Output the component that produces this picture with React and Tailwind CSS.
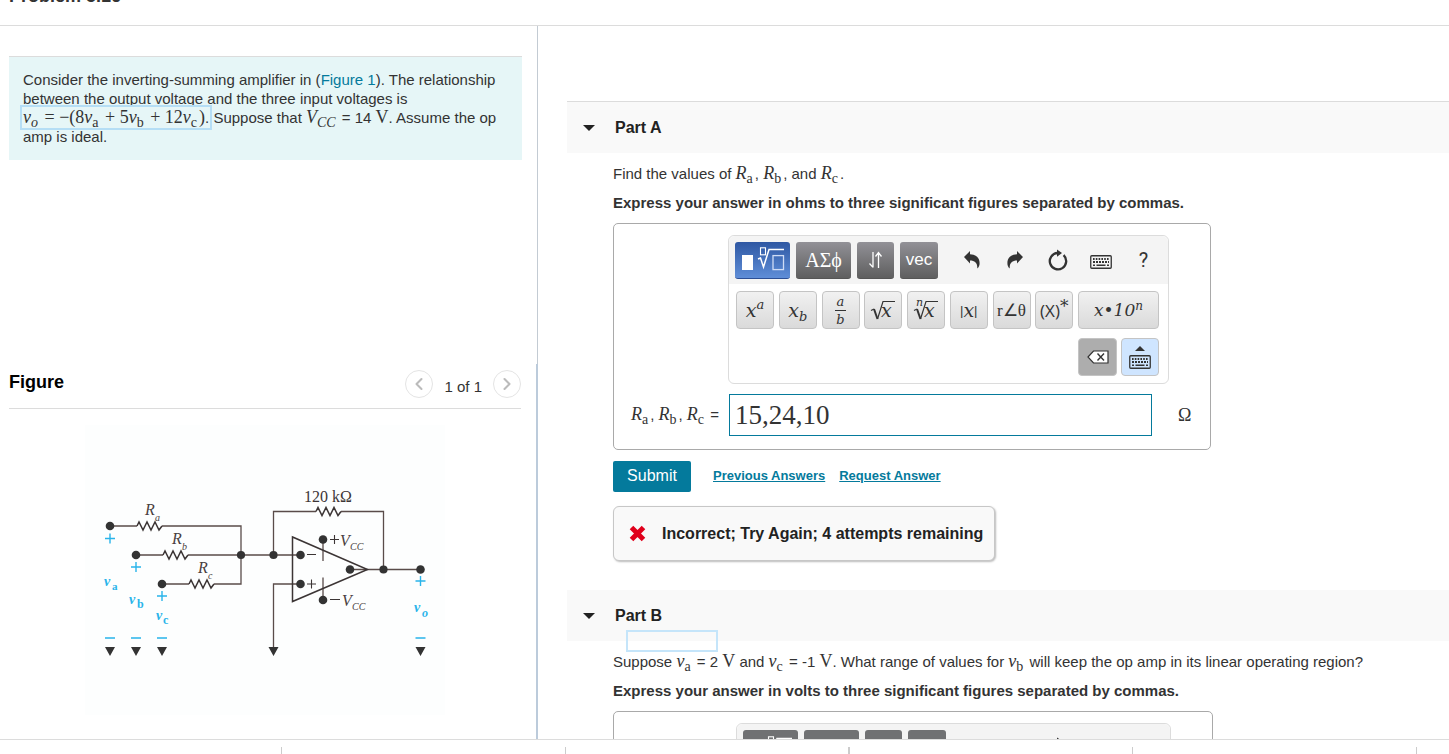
import { ChevronLeft, ChevronRight } from "lucide-react";

const serif = "font-['Liberation_Serif',serif]";

// A math symbol with an upright or italic subscript
function Sym({ base, sub, italicSub }) {
  return (
    <span className="mr-0.5 font-['Liberation_Serif',serif] text-[18px] leading-none">
      <i>{base}</i>
      <span
        className={
          italicSub
            ? "relative top-1 text-[14px] italic leading-none"
            : "relative top-1 text-[14px] leading-none"
        }
      >
        {sub}
      </span>
    </span>
  );
}

function Unit({ children }) {
  return <span className="font-['Liberation_Serif',serif] text-[18px] leading-none">{children}</span>;
}

function UndoIcon({ flip }) {
  return (
    <svg width="16" height="18" viewBox="0 0 16 18" className={flip ? "-scale-x-100" : ""}>
      <path
        fill="#333"
        d="M0 6 L6 0 V3.2 C12 3.4 15.6 6.8 15.6 12 C15.6 14.4 15 16 13.2 17.6 C13.8 12.4 11 9.6 6 9.6 V12.6 Z"
      />
    </svg>
  );
}

function ResetIcon() {
  return (
    <svg width="20" height="22" viewBox="0 0 20 22">
      <path d="M15.6 6.2 A8.2 8.2 0 1 1 9.5 4" fill="none" stroke="#333" strokeWidth="2.3" />
      <path d="M9 0.4 L14 4 L9 7.8 Z" fill="#333" />
    </svg>
  );
}

function KeyboardIcon() {
  return (
    <svg width="22" height="14" viewBox="0 0 22 14">
      <rect x="0.75" y="0.75" width="20.5" height="12.5" rx="1" fill="none" stroke="#333" strokeWidth="1.3" />
      <path d="M3 4 H19" stroke="#333" strokeWidth="1.8" strokeDasharray="1.6 1.2" />
      <path d="M3 7 H19" stroke="#333" strokeWidth="1.8" strokeDasharray="2 1" />
      <path d="M3 10.2 H5 M6.5 10.2 H15.5 M17 10.2 H19" stroke="#333" strokeWidth="1.6" />
    </svg>
  );
}

function TemplateIcon() {
  return (
    <svg width="44" height="25" viewBox="0 0 44 25">
      <rect x="1" y="8" width="11" height="15" fill="#fff" />
      <rect x="19.5" y="0.8" width="5" height="7" fill="none" stroke="#fff" strokeWidth="1.1" />
      <path d="M17 12 L19.5 11 L22.5 20 L28 2.5 H43" fill="none" stroke="#fff" strokeWidth="1.5" />
      <rect x="32" y="8.6" width="10.5" height="14" fill="none" stroke="#cfdcf5" strokeWidth="1.3" />
    </svg>
  );
}

function Root({ index }) {
  return (
    <svg width="28" height="26" viewBox="0 0 28 26" fill="none" stroke="#333">
      <path d="M2 13.5 L5 12" strokeWidth="1.1" />
      <path d="M5 12 L8.5 22" strokeWidth="2" />
      <path d="M8.5 22 L14 4.5 H26" strokeWidth="1.2" />
      <text x="12" y="20" fill="#333" stroke="none" fontFamily="DejaVu Serif" fontStyle="italic" fontSize="19">
        x
      </text>
      {index && (
        <text x="4" y="9" fill="#333" stroke="none" fontFamily="DejaVu Serif" fontStyle="italic" fontSize="11">
          {index}
        </text>
      )}
    </svg>
  );
}

const tabOn = "flex h-[37px] items-center justify-center rounded-[3px] border-b border-[#2c4f95] bg-linear-to-b from-[#2f58a3] to-[#5f8ed8] text-white";
const tabOff = "flex h-[37px] items-center justify-center rounded-[3px] border-b border-[#555] bg-linear-to-b from-[#929197] to-[#5f5f5f] text-white";
const tabFlat = "flex h-[37px] items-center justify-center rounded-[3px] bg-[#707173] text-white";
const key =
  "flex h-[38px] items-center justify-center rounded border border-[#c4c4c4] bg-linear-to-b from-[#f1f1f1] to-[#dadada] font-['DejaVu_Serif',serif] leading-none text-[#333]";

function Toolbar({ idle }) {
  const off = idle ? tabFlat : tabOff;
  return (
    <div
      className={`${idle ? "w-[435px]" : "w-[441px]"} shrink-0 rounded-md border border-[#dcdcdc] bg-white text-[#333]`}
    >
      <div className="flex h-12 items-center rounded-t-md bg-[#f4f4f4] pl-1.5">
        <div className="flex shrink-0 gap-1.5">
          <button aria-label="Templates" className={`${idle ? tabFlat : tabOn} w-[55px]`}>
            <TemplateIcon />
          </button>
          <button className={`${off} ${serif} w-[55px] text-[20px]`}>ΑΣϕ</button>
          <button aria-label="Arrows" className={`${off} w-[37px]`}>
            <svg width="16" height="20" viewBox="0 0 16 20" fill="none" stroke="#fff" strokeWidth="1.3">
              <path d="M5 2 V17 M1.5 13.5 L5 17.4 M5 17.4 V14" />
              <path d="M10.5 18 V3 M7.5 6.5 L10.5 2.6 L13.5 6.5" />
            </svg>
          </button>
          <button className={`${off} w-[38px] text-[17px]`}>vec</button>
        </div>
        <div className={`${idle ? "ml-1" : "ml-3"} flex flex-1 items-center`}>
          <button aria-label="Undo" className="flex w-[43px] justify-center">
            <UndoIcon />
          </button>
          <button aria-label="Redo" className="flex w-[43px] justify-center">
            <UndoIcon flip />
          </button>
          <button aria-label="Reset" className="flex w-[43px] justify-center">
            <ResetIcon />
          </button>
          <button aria-label="Keyboard shortcuts" className="flex w-[43px] justify-center pt-1">
            <KeyboardIcon />
          </button>
          <button aria-label="Help" className="w-[43px] text-center font-['Roboto',sans-serif] text-[20px]">
            ?
          </button>
        </div>
      </div>
      <div className="flex justify-between pt-[7px] pr-[9px] pl-[7px]">
        <button className={`${key} w-[38px] text-[19px]`}>
          <i>x</i>
          <i className="mb-3 text-[13px]">a</i>
        </button>
        <button className={`${key} w-[38px] text-[19px]`}>
          <i>x</i>
          <i className="mt-3 text-[13px]">b</i>
        </button>
        <button className={`${key} w-[38px] flex-col text-[13px] italic`}>
          <span className="border-b border-[#333] px-0.5 pb-0.5">a</span>
          <span className="pt-0.5">b</span>
        </button>
        <button aria-label="Square root" className={`${key} w-[38px]`}>
          <Root />
        </button>
        <button aria-label="nth root" className={`${key} w-[38px]`}>
          <Root index="n" />
        </button>
        <button className={`${key} w-[38px] text-[19px]`}>
          <span className="font-['Liberation_Sans',sans-serif] text-[13px]">|</span>
          <i>x</i>
          <span className="font-['Liberation_Sans',sans-serif] text-[13px]">|</span>
        </button>
        <button className={`${key} ${serif} w-[38px] text-[17px]`}>r∠θ</button>
        <button className={`${key} w-[38px] text-[17px]`}>
          <span className="font-['Open_Sans',sans-serif]">(X)</span>
          <span className="mb-2 text-[17px]">*</span>
        </button>
        <button className={`${key} w-[81px] text-[17px]`}>
          <i>x•10</i>
          <i className="mb-2 text-[12px]">n</i>
        </button>
      </div>
      <div className="flex justify-end gap-1 pt-[9px] pr-[9px] pb-[7px]">
        <button
          aria-label="Delete"
          className="flex h-[38px] w-[39px] items-center justify-center rounded border border-[#c4c4c4] bg-[#adadad]"
        >
          <svg width="22" height="14" viewBox="0 0 22 14" stroke="#333">
            <path d="M1 7 L6.5 1 H21 V13 H6.5 Z" fill="#fff" strokeWidth="1.2" />
            <path d="M10.5 3.5 L17 10.5 M17 3.5 L10.5 10.5" strokeWidth="1.4" />
          </svg>
        </button>
        <button
          aria-label="Hide keypad"
          className="flex h-[38px] w-[38px] flex-col items-center justify-center gap-1 rounded border border-[#c4c4c4] bg-[#cfe5ff]"
        >
          <svg width="10" height="5" viewBox="0 0 10 5">
            <path d="M0 5 L5 0 L10 5 Z" fill="#333" />
          </svg>
          <KeyboardIcon />
        </button>
      </div>
    </div>
  );
}

const resistor = "l2 -4 l4 8 l4 -8 l4 8 l4 -8 l4 8 l3 -4";

function Circuit() {
  return (
    <svg
      role="img"
      aria-label="Inverting-summing amplifier circuit"
      width="360"
      height="290"
      viewBox="85 425 360 290"
      fontFamily="Liberation Serif"
    >
      <rect x="85" y="425" width="360" height="290" fill="#fdfefe" />
      <g fill="none" stroke="#5a4c4a" strokeWidth="1.3">
        <path d="M110 526 H137 M162 526 H241 V584 H214 M189 584 H162 M136 555 H163 M188 555 H300" />
        <path d="M273.5 555 V511.5 H316 M341 511.5 H383.5 V569.5 M350 569.5 H420 M300 584 H273.5 V648" />
        <path d="M323 540 V561 M323 577.5 V600" />
      </g>
      <g fill="none" stroke="#3c3535" strokeWidth="1.5">
        <path d={`M137 526 ${resistor}`} />
        <path d={`M163 555 ${resistor}`} />
        <path d={`M189 584 ${resistor}`} />
        <path d={`M316 511.5 ${resistor}`} />
        <path d="M292.5 537 V601.5 L367.5 569.5 Z" />
        <path
          d="M307 554.5 H316 M307 584 H316 M311.5 579.5 V588.5 M330 539.5 H339 M334.5 535 V544 M330 599.5 H340"
          strokeWidth="1.1"
        />
      </g>
      <g fill="#333">
        <circle cx="110" cy="526" r="4.3" />
        <circle cx="136" cy="555" r="4.3" />
        <circle cx="162" cy="584" r="4.3" />
        <circle cx="241" cy="555" r="4.1" />
        <circle cx="273.5" cy="555" r="4.1" />
        <circle cx="300.5" cy="555" r="4.3" />
        <circle cx="300.5" cy="584" r="4.3" />
        <circle cx="323" cy="539.5" r="4.3" />
        <circle cx="323" cy="600" r="4.3" />
        <circle cx="350" cy="569.5" r="4.3" />
        <circle cx="383.5" cy="569.5" r="4.1" />
        <circle cx="420.5" cy="569.5" r="4.3" />
        <path d="M105 647 h10 l-5 9 z M131 647 h10 l-5 9 z M157 647 h10 l-5 9 z M268.5 647 h10 l-5 9 z M415.5 647 h10 l-5 9 z" />
      </g>
      <path
        fill="none"
        stroke="#29b4ea"
        strokeWidth="1.4"
        d="M105 538.5 h10 m-5 -5 v10 M131 567 h10 m-5 -5 v10 M157 596 h10 m-5 -5 v10 M415.5 581 h10 m-5 -5 v10 M105 638 h10 M131 638 h10 M157 638 h10 M415.5 638 h10"
      />
      <g fill="#29b4ea" fontWeight="bold" fontSize="14">
        <text x="104" y="586" fontStyle="italic">v</text>
        <text x="112" y="590" fontSize="11">a</text>
        <text x="129" y="604" fontStyle="italic">v</text>
        <text x="137" y="608" fontSize="12">b</text>
        <text x="156" y="620" fontStyle="italic">v</text>
        <text x="163" y="624" fontSize="12">c</text>
        <text x="414" y="612" fontStyle="italic">v</text>
        <text x="422" y="617" fontStyle="italic" fontSize="12">o</text>
      </g>
      <g fill="#4a4040" fontStyle="italic" fontSize="16">
        <text x="145" y="515">R</text>
        <text x="155" y="521" fontSize="10">a</text>
        <text x="172" y="544">R</text>
        <text x="182" y="550" fontSize="10">b</text>
        <text x="198" y="573">R</text>
        <text x="208" y="579" fontSize="10">c</text>
        <text x="340" y="546">V</text>
        <text x="350" y="550" fontSize="10">CC</text>
        <text x="342" y="606">V</text>
        <text x="352" y="610" fontSize="10">CC</text>
      </g>
      <text x="304" y="502" fill="#3c3535" fontSize="16">120 kΩ</text>
    </svg>
  );
}

function PartHeader({ title }) {
  return (
    <button className="flex h-[51px] w-full items-center gap-5 bg-[#f9f9f9] pl-4 text-left text-[16px] font-bold text-[#222]">
      <svg width="12" height="6" viewBox="0 0 12 6">
        <path d="M0 0 H12 L6 6 Z" fill="#222" />
      </svg>
      {title}
    </button>
  );
}

function ProblemPane() {
  return (
    <section className="h-[338px] shrink-0 border-r border-[#c3cbd3] pt-[30px] pr-[15px] pl-[9px]">
      <div className="h-[104px] border-t border-[#dcdcdc] bg-[#e6f6f7] pt-[13px] pr-3 pl-3.5 text-[15px] leading-[19px]">
        Consider the inverting-summing amplifier in (
        <a href="#figure" className="text-[#047a9c]">
          Figure 1
        </a>
        ). The relationship between the output voltage and the three input voltages is
        <br />
        <span className="inline-block h-[19px] whitespace-nowrap outline-2 outline-offset-1 outline-[#b5def5]">
          <Sym base="v" sub="o" italicSub />
          <Unit> = −(8</Unit>
          <Sym base="v" sub="a" />
          <Unit> + 5</Unit>
          <Sym base="v" sub="b" />
          <Unit> + 12</Unit>
          <Sym base="v" sub="c" />
          <Unit>)</Unit>.
        </span>{" "}
        Suppose that <Sym base="V" sub="CC" italicSub /> = 14 <Unit>V</Unit>. Assume the op amp is ideal.
      </div>
    </section>
  );
}

function FigurePane() {
  return (
    <section id="figure" className="flex-1 border-r-2 border-[#bccbdb] pr-[15px] pl-[9px]">
      <div className="flex h-[45px] items-center justify-between border-b border-[#dcdcdc]">
        <h2 className="pb-2 text-[18px] font-bold text-black">Figure</h2>
        <div className="flex items-center gap-[11px] pb-1 text-[15px]">
          <button
            aria-label="Previous figure"
            className="flex size-7 items-center justify-center rounded-full border border-[#e4e4e4] text-[#bbb]"
          >
            <ChevronLeft size={20} strokeWidth={2.5} />
          </button>
          <span className="pt-1.5">1 of 1</span>
          <button
            aria-label="Next figure"
            className="flex size-7 items-center justify-center rounded-full border border-[#e4e4e4] text-[#bbb]"
          >
            <ChevronRight size={20} strokeWidth={2.5} />
          </button>
        </div>
      </div>
      <div className="flex justify-center pt-4">
        <Circuit />
      </div>
    </section>
  );
}

function PartA() {
  return (
    <section>
      <div className="border-t border-[#dcdcdc]">
        <PartHeader title="Part A" />
      </div>
      <div className="pl-[46px]">
        <p className="pt-[11px] text-[15px] leading-[20px]">
          Find the values of <Sym base="R" sub="a" />, <Sym base="R" sub="b" />, and <Sym base="R" sub="c" />.
        </p>
        <p className="pt-[9px] text-[15px] leading-[20px] font-bold">
          Express your answer in ohms to three significant figures separated by commas.
        </p>
        <div className="mt-2.5 w-[598px] rounded-[5px] border border-[#a9a9a9] pt-[11px] pb-[13px]">
          <div className="pl-[114px]">
            <Toolbar />
          </div>
          <div className="flex items-center pt-2.5">
            <label htmlFor="answer" className="w-[115px] pr-2.5 text-right text-[15px]">
              <Sym base="R" sub="a" />, <Sym base="R" sub="b" />, <Sym base="R" sub="c" /> =
            </label>
            <input
              id="answer"
              defaultValue="15,24,10"
              className="h-[42px] w-[423px] border border-[#047a9c] px-[5px] font-['Liberation_Serif',serif] text-[27px] text-[#333] outline-none"
            />
            <span className={`${serif} pl-[26px] text-[18px]`}>Ω</span>
          </div>
        </div>
        <div className="flex items-center pt-[11px] text-[13px] font-bold">
          <button className="h-[31px] w-[78px] rounded-xs bg-[#047a9c] pb-0.5 text-[16px] font-normal text-white">
            Submit
          </button>
          <a href="#previous" className="ml-[22px] pb-0.5 text-[#047a9c] underline">
            Previous Answers
          </a>
          <a href="#request" className="ml-[14px] pb-0.5 text-[#047a9c] underline">
            Request Answer
          </a>
        </div>
        <div className="mt-3.5 flex h-[55px] w-[382px] items-center rounded-md border border-[#c7c7c7] bg-[#f9f9f9] pl-[15px] text-[16px] font-bold text-[#222] shadow-[1px_1px_2px_#bbb]">
          <svg width="17" height="17" viewBox="0 0 17 17">
            <path d="M2.5 2.5 L14.5 14.5 M14.5 2.5 L2.5 14.5" stroke="#e0001b" strokeWidth="5" />
          </svg>
          <span className="ml-4">Incorrect; Try Again; 4 attempts remaining</span>
        </div>
      </div>
    </section>
  );
}

function PartB() {
  return (
    <section className="relative pt-[29px]">
      <PartHeader title="Part B" />
      <div className="absolute top-[69px] left-[59px] h-[22px] w-[92px] border-2 border-[#c5e5fa]" />
      <div className="pl-[46px]">
        <p className="pt-[11px] text-[15px] leading-[20px]">
          Suppose <Sym base="v" sub="a" /> = 2 <Unit>V</Unit> and <Sym base="v" sub="c" /> = -1 <Unit>V</Unit>. What
          range of values for <Sym base="v" sub="b" /> will keep the op amp in its linear operating region?
        </p>
        <p className="pt-[9px] text-[15px] leading-[20px] font-bold">
          Express your answer in volts to three significant figures separated by commas.
        </p>
        <div className="mt-2.5 w-[600px] rounded-[5px] border border-[#a9a9a9] pt-[11px] pl-[122px]">
          <Toolbar idle />
        </div>
      </div>
    </section>
  );
}

export default function App() {
  return (
    <div className="flex h-screen flex-col overflow-hidden bg-white font-['Liberation_Sans',sans-serif] text-[#333]">
      <header className="flex h-[26px] shrink-0 items-start overflow-hidden border-b border-[#dcdcdc] pl-[9px]">
        <h1 className="-mt-4 text-[18px] leading-6 font-bold">Problem 5.16</h1>
      </header>
      <main className="flex min-h-0 flex-1 overflow-hidden">
        <div className="flex w-[538px] shrink-0 flex-col">
          <ProblemPane />
          <FigurePane />
        </div>
        <div className="min-w-0 flex-1 overflow-hidden pt-[75px] pl-[29px]">
          <PartA />
          <PartB />
        </div>
      </main>
      <footer className="flex h-[15px] shrink-0 overflow-hidden border-t border-[#dcdcdc] pt-[7px]">
        <div className="w-[282px] shrink-0 border-r border-[#ccc]" />
        <div className="w-[284px] shrink-0 border-r border-[#ccc]" />
        <div className="w-[284px] shrink-0 border-r-2 border-[#ccc]" />
        <div className="w-[283px] shrink-0 border-r border-[#ccc]" />
        <div className="w-[284px] shrink-0 border-r border-[#ccc]" />
      </footer>
    </div>
  );
}
